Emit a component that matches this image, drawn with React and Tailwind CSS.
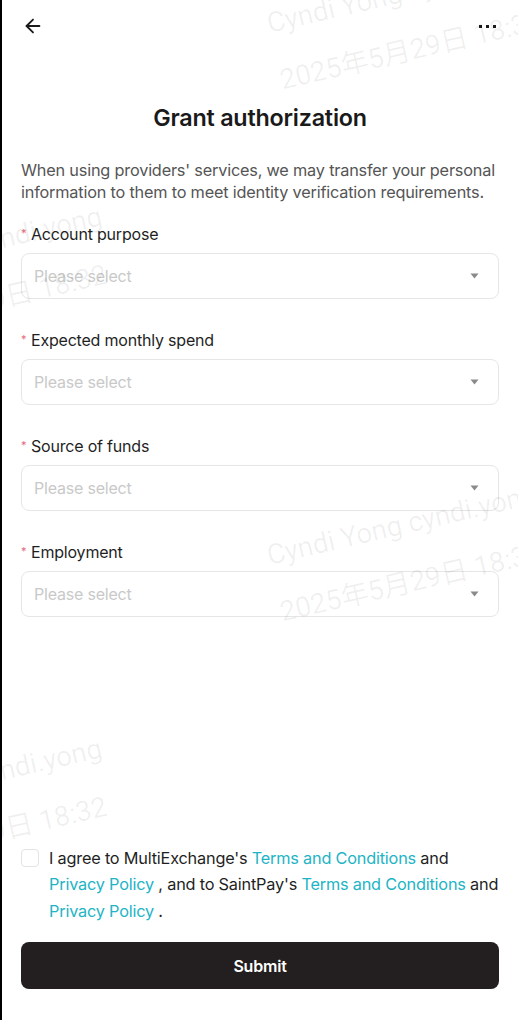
import React from 'react';
import { ArrowLeft } from 'lucide-react';

const fields = ['Account purpose', 'Expected monthly spend', 'Source of funds', 'Employment'];

// faint rotated watermark tiles laid over the page
const marks = [
  { left: 'left-[259px]', top: 'top-[-4px]' },
  { left: 'left-[259px]', top: 'top-[528px]' },
  { left: 'left-[-176px]', top: 'top-[250px]' },
  { left: 'left-[-176px]', top: 'top-[782px]' },
];

const Watermark = ({ left, top }) => (
  <div
    className={`pointer-events-none absolute ${left} ${top} origin-top-left -rotate-[13deg] whitespace-nowrap text-[28px] leading-[58px] text-black/[0.06] font-['Roboto','Noto_Sans_CJK_SC',sans-serif]`}
  >
    <div>Cyndi Yong cyndi.yong</div>
    <div>2025年5月29日 18:32</div>
  </div>
);

const SelectField = ({ label }) => (
  <div>
    <div className="flex items-start h-[22px]">
      <span className="mt-[3px] text-[#e56a7c] text-[11px] leading-[14px] w-[10px]">*</span>
      <span className="text-[16px] leading-[22px] text-[#1f1f1f]">{label}</span>
    </div>
    <div className="mt-2 h-[46px] rounded-lg border border-[#e6e6e6] flex items-center justify-between pl-3 pr-[19px]">
      <span className="text-[16px] text-[#c9c9c9]">Please select</span>
      <svg width="9" height="6" viewBox="0 0 9 6">
        <path d="M0.5 0.5h8L4.5 5.5z" fill="#8a8a8a" />
      </svg>
    </div>
  </div>
);

const Link = ({ children }) => <span className="text-[#22b4c5]">{children}</span>;

export default function App() {
  return (
    <div className="relative h-[1020px] overflow-hidden bg-white border-l-2 border-black flex flex-col font-['Inter',sans-serif] tracking-[-0.2px]">
      {/* Header */}
      <div className="h-[52px] flex items-center justify-between pl-[20px] pr-[22px]">
        <ArrowLeft size={22} strokeWidth={2} className="text-[#1a1a1a]" />
        <svg width="17" height="3" viewBox="0 0 17 3">
          <rect x="0" y="0" width="3" height="3" fill="#1a1a1a" />
          <rect x="7" y="0" width="3" height="3" fill="#1a1a1a" />
          <rect x="14" y="0" width="3" height="3" fill="#1a1a1a" />
        </svg>
      </div>

      <div className="px-[19px] flex-1 flex flex-col">
        <h1 className="mt-[51px] text-center text-[23.3px] leading-[30px] font-semibold text-[#1a1a1a]">
          Grant authorization
        </h1>
        <p className="mt-[26px] text-[16.3px] leading-[22px] text-[#555555]">
          When using providers' services, we may transfer your personal information to them to meet identity verification requirements.
        </p>

        <div className="mt-[20px] flex flex-col gap-[30px]">
          {fields.map((f) => (
            <SelectField key={f} label={f} />
          ))}
        </div>

        <div className="flex-1" />

        <div className="flex gap-[10px]">
          <div className="mt-[4px] w-[18px] h-[18px] shrink-0 rounded border border-[#e3e3e3]" />
          <p className="text-[16.3px] leading-[26.5px] text-[#1f1f1f]">
            I agree to MultiExchange's <Link>Terms and Conditions</Link> and <Link>Privacy Policy</Link> , and to SaintPay's <Link>Terms and Conditions</Link> and <Link>Privacy Policy</Link> .
          </p>
        </div>

        <button className="mt-[18px] mb-[31px] h-[47px] w-full rounded-lg bg-[#231f20] text-white text-[16px] font-semibold">
          Submit
        </button>
      </div>

      {marks.map((m, i) => (
        <Watermark key={i} {...m} />
      ))}
    </div>
  );
}
